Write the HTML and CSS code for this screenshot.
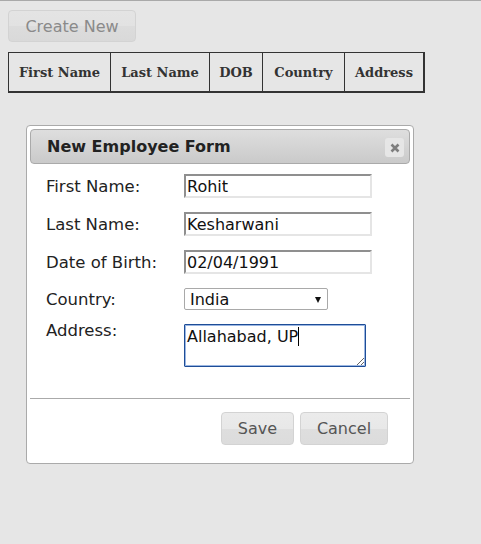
FILE: index.html
```html
<!DOCTYPE html>
<html>
<head>
<meta charset="utf-8">
<link rel="stylesheet" href="styles.css">
</head>
<body>
<div class="page">
  <button class="btn btn-create" type="button">Create New</button>
  <table class="grid">
    <thead>
      <tr>
        <th>First Name</th>
        <th>Last Name</th>
        <th>DOB</th>
        <th>Country</th>
        <th>Address</th>
      </tr>
    </thead>
  </table>
</div>

<div class="dialog">
  <div class="titlebar">
    <span class="title">New Employee Form</span>
    <span class="close">
      <svg width="10" height="10" viewBox="0 0 10 10"><path d="M1.5 1.5 L8.5 8.5 M8.5 1.5 L1.5 8.5" stroke="#7e7e7e" stroke-width="2.6" stroke-linecap="butt"/></svg>
    </span>
  </div>
  <div class="content">
    <div class="row">
      <label class="lbl">First Name:</label>
      <input class="txt" type="text" value="Rohit">
    </div>
    <div class="row">
      <label class="lbl">Last Name:</label>
      <input class="txt" type="text" value="Kesharwani">
    </div>
    <div class="row">
      <label class="lbl">Date of Birth:</label>
      <input class="txt" type="text" value="02/04/1991">
    </div>
    <div class="row">
      <label class="lbl">Country:</label>
      <div class="select-wrap">
        <select class="sel"><option>India</option></select>
      </div>
    </div>
    <div class="row row-top">
      <label class="lbl">Address:</label>
      <div class="area-wrap">
        <textarea class="area">Allahabad, UP</textarea>
        <span class="caret"></span>
      </div>
    </div>
  </div>
  <div class="buttonpane">
    <button class="btn btn-dlg btn-save" type="button">Save</button>
    <button class="btn btn-dlg btn-cancel" type="button">Cancel</button>
  </div>
</div>
</body>
</html>
```

FILE: styles.css
```css
html, body {
  margin: 0;
  padding: 0;
}
body {
  background: #e6e6e6;
  border-top: 1px solid #a9a9a9;
  min-height: 543px;
  font-family: "DejaVu Sans", Verdana, sans-serif;
}
.page {
  padding: 9px 8px 0 8px;
}
.btn {
  font-family: "DejaVu Sans", Verdana, sans-serif;
  font-size: 16px;
  border: 1px solid #d3d3d3;
  border-radius: 4px;
  background: linear-gradient(#ebebeb 0%, #e8e8e8 50%, #dedede 51%, #dcdcdc 100%);
  color: #555;
  padding: 0;
  margin: 0;
  cursor: default;
}
.btn-create {
  display: block;
  width: 128px;
  height: 32px;
  color: #8a8a8a;
  background: linear-gradient(#e4e4e4 0%, #e2e2e2 50%, #dcdcdc 51%, #d9d9d9 100%);
}
.grid {
  margin-top: 10px;
  border-collapse: collapse;
  border-top: 1px solid #333;
  border-left: 1px solid #333;
  border-right: 2px solid #333;
  border-bottom: 2px solid #333;
}
.grid th {
  font-family: "DejaVu Serif", "Liberation Serif", Georgia, serif;
  font-weight: bold;
  font-size: 13px;
  color: #333;
  height: 37px;
  padding: 1px 0 0 0;
  border-right: 1px solid #333;
  text-align: center;
}
.grid th:nth-child(1) { width: 101px; }
.grid th:nth-child(2) { width: 98px; }
.grid th:nth-child(3) { width: 52px; }
.grid th:nth-child(4) { width: 81px; }
.grid th:nth-child(5) { width: 78px; border-right: none; }

.dialog {
  position: absolute;
  left: 26px;
  top: 125px;
  width: 380px;
  height: 331px;
  padding: 3px;
  background: #fff;
  border: 1px solid #aaa;
  border-radius: 4px;
  display: flex;
  flex-direction: column;
}
.titlebar {
  height: 33px;
  border: 1px solid #aaa;
  border-radius: 4px;
  background: linear-gradient(#dedede, #cacaca);
  display: flex;
  align-items: center;
  justify-content: space-between;
  padding: 0 5px 0 16px;
}
.title {
  font-weight: bold;
  font-size: 16px;
  color: #222;
}
.close {
  width: 19px;
  height: 19px;
  border-radius: 3px;
  background: #e6e6e6;
  display: flex;
  align-items: center;
  justify-content: center;
  margin-top: 2px;
}
.close svg { display: block; }

.content {
  padding: 10px 0 0 16px;
  height: 224px;
  display: flex;
  flex-direction: column;
  gap: 14px;
}
.row {
  display: flex;
  align-items: center;
}
.row-top {
  align-items: flex-start;
}
.lbl {
  width: 138px;
  font-size: 16.5px;
  line-height: 19px;
  color: #222;
}
.row-top .lbl {
  line-height: 15px;
  margin-top: -1px;
}
.txt {
  box-sizing: border-box;
  width: 188px;
  height: 24px;
  margin: 0;
  padding: 0 0 0 1px;
  border-style: solid;
  border-width: 2px;
  border-color: #8f8f8f #e5e5e5 #e5e5e5 #8f8f8f;
  font-family: "DejaVu Sans", Verdana, sans-serif;
  font-size: 16px;
  color: #111;
  background: #fff;
}
.select-wrap {
  position: relative;
  width: 144px;
  height: 22px;
}
.select-wrap::after {
  content: "";
  position: absolute;
  right: 7px;
  top: 9px;
  width: 0;
  height: 0;
  border-left: 3px solid transparent;
  border-right: 3px solid transparent;
  border-top: 6px solid #111;
  pointer-events: none;
}
.sel {
  -webkit-appearance: none;
  appearance: none;
  box-sizing: border-box;
  width: 144px;
  height: 22px;
  margin: 0;
  padding: 0 0 0 5px;
  border: 1px solid #a9a9a9;
  border-radius: 2px;
  background: #fff;
  font-family: "DejaVu Sans", Verdana, sans-serif;
  font-size: 16px;
  color: #111;
}
.area-wrap {
  position: relative;
  width: 182px;
  height: 43px;
}
.area {
  box-sizing: border-box;
  width: 182px;
  height: 43px;
  margin: 0;
  padding: 2px 2px;
  border: 1px solid #1e4d97;
  border-radius: 1px;
  box-shadow: inset 0 0 0 1px #9ab6e2;
  outline: none;
  font-family: "DejaVu Sans", Verdana, sans-serif;
  font-size: 16px;
  color: #111;
  background: #fff;
  resize: both;
  overflow: hidden;
}
.caret {
  position: absolute;
  left: 114px;
  top: 3px;
  width: 1px;
  height: 19px;
  background: #000;
}
.buttonpane {
  border-top: 1px solid #aaa;
  display: flex;
  justify-content: flex-end;
  gap: 6px;
  padding: 13px 22px 0 0;
}
.btn-dlg {
  height: 33px;
}
.btn-save { width: 73px; }
.btn-cancel { width: 88px; }
```
